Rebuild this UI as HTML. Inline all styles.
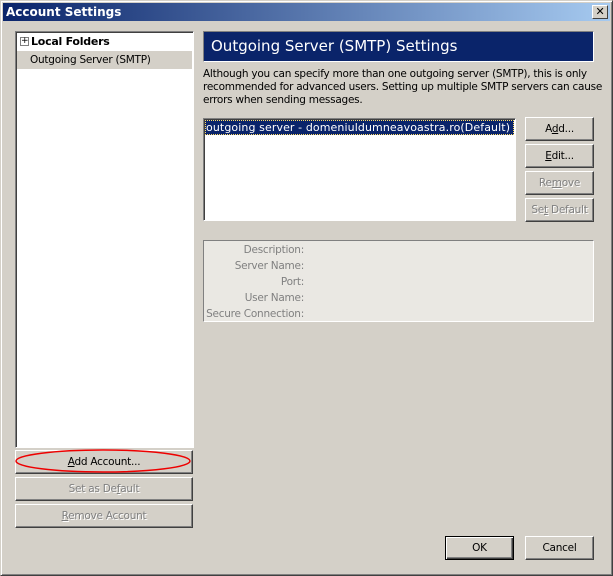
<!DOCTYPE html>
<html><head><style>
*{margin:0;padding:0;box-sizing:border-box}
body{width:613px;height:576px;background:#d4d0c8;font-family:"DejaVu Sans","Liberation Sans",sans-serif;font-size:10.5px;letter-spacing:-0.25px;position:relative;overflow:hidden;color:#000}
.win{position:absolute;left:0;top:0;width:613px;height:576px;border:1px solid;border-color:#d4d0c8 #404040 #404040 #d4d0c8;box-shadow:inset 1px 1px 0 #fff,inset -1px -1px 0 #808080}
.title{position:absolute;left:3px;top:3px;width:607px;height:18px;background:linear-gradient(to right,#0a246a,#a6caf0);color:#fff;font-weight:bold;font-size:12px;line-height:18px;padding-left:3px;letter-spacing:0}
.close{position:absolute;right:5px;top:5px;width:16px;height:14px;background:#d4d0c8;border:1px solid;border-color:#fff #404040 #404040 #fff;font-size:11px;font-weight:bold;text-align:center;line-height:12px;color:#000}
.abs{position:absolute}
.sunk{border:1px solid;border-color:#808080 #fff #fff #808080;box-shadow:inset 1px 1px 0 #404040}
.btn{position:absolute;border:1px solid;border-color:#fff #404040 #404040 #fff;box-shadow:inset -1px -1px 0 #808080;text-align:center;line-height:23px;background:#d4d0c8}
.dis{color:#808080;text-shadow:1px 1px 0 #fff}
u{text-decoration:underline}
</style></head><body>
<div class="win"></div>
<div class="title">Account Settings</div>
<div class="close">✕</div>
<div class="abs sunk" style="left:15px;top:31px;width:179px;height:417px;background:#fff">
  <div class="abs" style="left:4px;top:5px;width:9px;height:9px;border:1px solid #808080;font-size:9px;line-height:7px;text-align:center">+</div>
  <div class="abs" style="left:15px;top:3px;font-weight:bold;font-size:11px">Local Folders</div>
  <div class="abs" style="left:1px;top:19px;width:175px;height:18px;background:#d4d0c8;padding-left:13px;line-height:18px">Outgoing Server (SMTP)</div>
</div>
<div class="btn" style="left:15px;top:450px;width:178px;height:24px"><u>A</u>dd Account...</div>
<svg class="abs" style="left:14px;top:447px" width="180" height="28"><ellipse cx="89" cy="14" rx="87" ry="11" fill="none" stroke="#e00" stroke-width="1.5"/></svg>
<div class="btn dis" style="left:15px;top:477px;width:178px;height:24px">Set as De<u>f</u>ault</div>
<div class="btn dis" style="left:15px;top:504px;width:178px;height:24px"><u>R</u>emove Account</div>

<div class="abs" style="left:203px;top:31px;width:391px;height:31px;background:#0a246a;border:1px solid;border-color:#808080 #fff #fff #808080;color:#fff;font-size:15px;letter-spacing:0;line-height:28px;padding-left:7px">Outgoing Server (SMTP) Settings</div>
<div class="abs" style="left:203px;top:68px;width:400px;line-height:13px">Although you can specify more than one outgoing server (SMTP), this is only recommended for advanced users. Setting up multiple SMTP servers can cause errors when sending messages.</div>
<div class="abs sunk" style="left:203px;top:118px;width:313px;height:103px;background:#fff">
  <div class="abs" style="left:1px;top:1px;width:309px;height:15px;background:#0a246a;color:#fff;outline:1px dotted #ffdd66;outline-offset:-1px;line-height:15px;padding-left:1px;white-space:nowrap;font-size:11px;letter-spacing:0.1px">outgoing server - domeniuldumneavoastra.ro(Default)</div>
</div>
<div class="btn" style="left:525px;top:117px;width:69px;height:24px">A<u>d</u>d...</div>
<div class="btn" style="left:525px;top:144px;width:69px;height:24px"><u>E</u>dit...</div>
<div class="btn dis" style="left:525px;top:171px;width:69px;height:24px">Re<u>m</u>ove</div>
<div class="btn dis" style="left:525px;top:198px;width:69px;height:24px">Se<u>t</u> Default</div>

<div class="abs" style="left:203px;top:240px;width:391px;height:82px;background:#eae8e3;border:1px solid;border-color:#808080 #fff #fff #808080;color:#808080">
  <div class="abs" style="right:289px;top:1px;text-align:right;line-height:16px;white-space:nowrap">Description:<br>Server Name:<br>Port:<br>User Name:<br>Secure Connection:</div>
</div>

<div class="btn" style="left:445px;top:536px;width:69px;height:24px;border:1px solid #000;box-shadow:inset 1px 1px 0 #fff,inset -1px -1px 0 #404040,inset -2px -2px 0 #808080;line-height:22px">OK</div>
<div class="btn" style="left:525px;top:536px;width:69px;height:24px">Cancel</div>
</body></html>
